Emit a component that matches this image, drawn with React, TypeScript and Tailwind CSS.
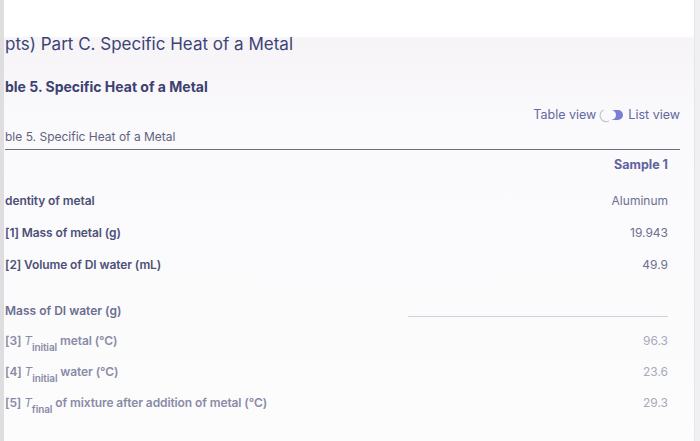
import { ReactNode } from 'react'

type Row = { label: ReactNode; value?: string; faded?: boolean }

function T({ sub }: { sub: string }) {
  return (
    <span>
      <i className="font-normal">T</i>
      <sub className="text-[10px] align-[-3px]">{sub}</sub>
    </span>
  )
}

const topRows: Row[] = [
  { label: 'dentity of metal', value: 'Aluminum' },
  { label: '[1] Mass of metal (g)', value: '19.943' },
  { label: '[2] Volume of DI water (mL)', value: '49.9' },
]

const bottomRows: Row[] = [
  { label: <>[3] <T sub="initial" /> metal (°C)</>, value: '96.3', faded: true },
  { label: <>[4] <T sub="initial" /> water (°C)</>, value: '23.6', faded: true },
  { label: <>[5] <T sub="final" /> of mixture after addition of metal (°C)</>, value: '29.3', faded: true },
]

function DataRow({ row }: { row: Row }) {
  return (
    <div className="flex items-center h-[32px] pr-[12px]">
      <span
        className={`flex-1 text-[12px] font-semibold tracking-[-0.1px] ${row.faded ? 'text-[#8a8ba6]' : 'text-[#4d5078]'}`}
      >
        {row.label}
      </span>
      <span className={`text-[12px] ${row.faded ? 'text-[#a8a9bb]' : 'text-[#6c6f90]'}`}>{row.value}</span>
    </div>
  )
}

function Toggle() {
  return (
    <svg width="30" height="16" viewBox="0 0 30 16" className="mx-[1px]">
      <path d="M12 14 A6 6 0 0 1 6.5 3" fill="none" stroke="#c4c4d2" strokeWidth="1.2" />
      <path d="M14 3 h7 a5 5 0 0 1 0 10 h-7 a2.5 2.5 0 0 0 0 -10 z" fill="#7a7ed8" />
    </svg>
  )
}

export default function App() {
  return (
    <div
      className="w-[700px] h-[441px] flex overflow-hidden bg-[linear-gradient(to_bottom,#ffffff_36px,#f7f4f8_38px,#faf9fb_120px,#fcfcfd)]"
      style={{ fontFamily: 'Inter, "Noto Sans", sans-serif' }}
    >
      <div className="w-[4px] bg-[#dedee1]" />
      <div className="flex-1 pl-[1px] pr-[14px] flex flex-col">
        <h2 className="mt-[32px] h-[24px] leading-[24px] text-[17px] text-[#3b4476] whitespace-nowrap">
          pts) Part C. Specific Heat of a Metal
        </h2>
        <h3 className="mt-[21px] h-[20px] leading-[20px] text-[14px] font-bold text-[#3b4170] whitespace-nowrap">
          ble 5. Specific Heat of a Metal
        </h3>
        <div className="mt-[8px] h-[20px] flex items-center justify-end text-[12.5px] text-[#6468a0]">
          <span>Table view</span>
          <Toggle />
          <span>List view</span>
        </div>
        <div className="mt-[4px] h-[16px] leading-[16px] text-[12px] text-[#60637f]">
          ble 5. Specific Heat of a Metal
        </div>
        <div className="mt-[4px] border-t-[1.5px] border-[#6d6e78]" />
        <div className="flex items-center justify-end h-[31px] pr-[12px] text-[12.5px] font-bold text-[#5f62a0]">
          Sample 1
        </div>
        <div className="h-[4px]" />
        {topRows.map((r, i) => (
          <DataRow key={i} row={r} />
        ))}
        <div className="h-[14px]" />
        <div className="flex items-center h-[32px] pr-[12px]">
          <span className="flex-1 text-[12px] font-semibold text-[#6d6f92]">Mass of DI water (g)</span>
          <span className="w-[260px] h-[22px] self-start border-b border-[#d2d2da]" />
        </div>
        {bottomRows.map((r, i) => (
          <div key={i} className={i === 0 ? '-mt-[2px]' : '-mt-[1px]'}>
            <DataRow row={r} />
          </div>
        ))}
      </div>
      <div className="w-[6px] border-l border-[#e6e6ea] bg-[#f0f0f2]" />
    </div>
  )
}
